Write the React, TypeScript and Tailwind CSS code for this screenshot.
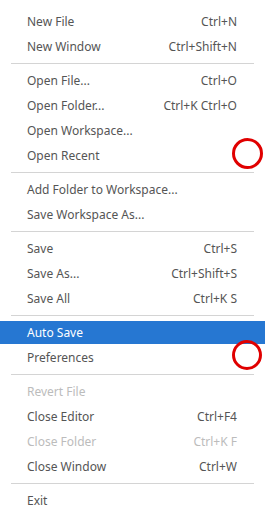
import React from 'react';

type Item = { label: string; key?: string; disabled?: boolean; active?: boolean } | 'sep';

const items: Item[] = [
  { label: 'New File', key: 'Ctrl+N' },
  { label: 'New Window', key: 'Ctrl+Shift+N' },
  'sep',
  { label: 'Open File...', key: 'Ctrl+O' },
  { label: 'Open Folder...', key: 'Ctrl+K Ctrl+O' },
  { label: 'Open Workspace...' },
  { label: 'Open Recent' },
  'sep',
  { label: 'Add Folder to Workspace...' },
  { label: 'Save Workspace As...' },
  'sep',
  { label: 'Save', key: 'Ctrl+S' },
  { label: 'Save As...', key: 'Ctrl+Shift+S' },
  { label: 'Save All', key: 'Ctrl+K S' },
  'sep',
  { label: 'Auto Save', active: true },
  { label: 'Preferences' },
  'sep',
  { label: 'Revert File', disabled: true },
  { label: 'Close Editor', key: 'Ctrl+F4' },
  { label: 'Close Folder', key: 'Ctrl+K F', disabled: true },
  { label: 'Close Window', key: 'Ctrl+W' },
  'sep',
  { label: 'Exit' },
];

export default function App() {
  return (
    <div className="relative w-[265px] h-[519px] bg-white pt-[9px] font-['Noto_Sans',sans-serif] text-[12px]">
      {items.map((item, i) =>
        item === 'sep' ? (
          <div key={i} className="py-1 px-[11px]">
            <div className="h-px bg-[#d4d4d4]" />
          </div>
        ) : (
          <div key={i} className="h-[25px] py-px">
            <div
              className={
                'h-[23px] flex items-center justify-between pl-[27px] pr-[28px] ' +
                (item.active
                  ? 'bg-[#2677d2] text-white'
                  : item.disabled
                  ? 'text-[#bcbcbc]'
                  : 'text-[#555555]')
              }
            >
              <span>{item.label}</span>
              {item.key && <span>{item.key}</span>}
            </div>
          </div>
        )
      )}
      <div className="absolute left-[232px] top-[138px] w-[31px] h-[31px] rounded-full border-[3px] border-[#e00000]" />
      <div className="absolute left-[232px] top-[340px] w-[30px] h-[30px] rounded-full border-[3px] border-[#e00000]" />
    </div>
  );
}
